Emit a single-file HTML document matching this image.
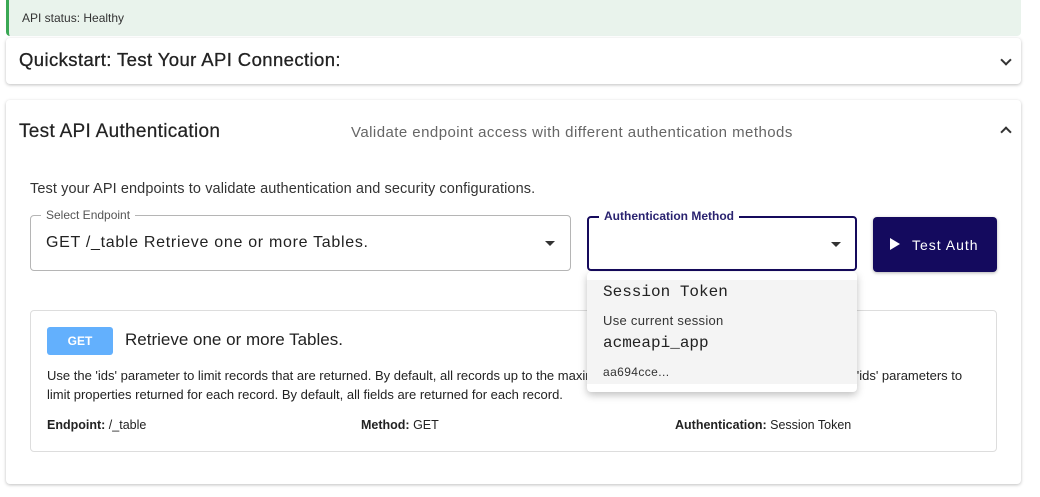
<!DOCTYPE html>
<html><head><style>
*{box-sizing:border-box;margin:0;padding:0}
body{width:1040px;height:497px;background:#fff;font-family:"Liberation Sans",sans-serif;position:relative;overflow:hidden;color:#222}
.abs{position:absolute}
.card{position:absolute;left:6px;width:1015px;background:#fff;border-radius:4px;box-shadow:0 1px 3px rgba(0,0,0,.25)}
.chev{position:absolute;width:8px;height:8px;border-right:2px solid #333;border-bottom:2px solid #333}
.field{position:absolute;border:1px solid #b5b5b5;border-radius:4px}
.lbl{position:absolute;top:-8px;left:10px;background:#fff;padding:0 5px;font-size:12px}
.tri{position:absolute;width:0;height:0;border-left:5px solid transparent;border-right:5px solid transparent;border-top:5px solid #333}
</style></head><body>
<div class="abs" style="left:6px;top:0;width:1015px;height:36px;background:#e9f3ec;border-left:3px solid #3aa854;border-radius:0 0 4px 4px;font-size:12px;padding:11px 0 0 13px;color:#333">API status: Healthy</div>
<div class="card" style="top:38px;height:46px">
 <div class="abs" style="left:13px;top:11px;font-size:18.5px;letter-spacing:.4px;color:#222;-webkit-text-stroke:.3px #222">Quickstart: Test Your API Connection:</div>
 <div class="chev" style="left:996px;top:18px;transform:rotate(45deg)"></div>
</div>
<div class="card" style="top:100px;height:384px">
 <div class="abs" style="left:13px;top:21px;font-size:19px;letter-spacing:.3px;-webkit-text-stroke:.2px #222">Test API Authentication</div>
 <div class="abs" style="left:345px;top:24px;font-size:15px;letter-spacing:.45px;color:#666">Validate endpoint access with different authentication methods</div>
 <div class="chev" style="left:996px;top:28px;transform:rotate(-135deg)"></div>
 <div class="abs" style="left:24px;top:81px;font-size:14.5px;letter-spacing:.1px;color:#333">Test your API endpoints to validate authentication and security configurations.</div>
 <div class="field" style="left:24px;top:115px;width:541px;height:56px">
  <div class="lbl" style="color:#555">Select Endpoint</div>
  <div class="abs" style="left:15px;top:18px;font-size:16px;letter-spacing:.7px;color:#222">GET /_table Retrieve one or more Tables.</div>
  <div class="tri" style="left:514px;top:25px"></div>
 </div>
 <div class="field" style="left:581px;top:116px;width:270px;height:55px;border:2px solid #150a5c">
  <div class="lbl" style="color:#2a2370;font-weight:bold;top:-9px">Authentication Method</div>
  <div class="tri" style="left:242px;top:24px"></div>
 </div>
 <div class="abs" style="left:867px;top:117px;width:124px;height:55px;background:#140a5e;border-radius:4px;color:#fff;font-size:14px;box-shadow:0 1px 3px rgba(0,0,0,.3)">
  <div class="abs" style="left:17px;top:21px;width:0;height:0;border-top:6px solid transparent;border-bottom:6px solid transparent;border-left:10px solid #fff"></div>
  <div class="abs" style="left:39px;top:20px;letter-spacing:1px">Test Auth</div>
 </div>
 <div class="abs" style="left:24px;top:210px;width:967px;height:142px;border:1px solid #ddd;border-radius:4px">
  <div class="abs" style="left:16px;top:16px;width:66px;height:28px;background:#63b0fd;border-radius:3px;color:#fff;font-weight:bold;font-size:12px;text-align:center;line-height:28px">GET</div>
  <div class="abs" style="left:94px;top:19px;font-size:17px">Retrieve one or more Tables.</div>
  <div class="abs" style="left:16px;top:55px;width:935px;font-size:13px;line-height:19px;color:#222">Use the 'ids' parameter to limit records that are returned. By default, all records up to the maximum are returned. Use the 'fields' and 'related' 'ids' parameters to limit properties returned for each record. By default, all fields are returned for each record.</div>
  <div class="abs" style="left:16px;top:107px;font-size:12.5px"><b>Endpoint:</b> /_table</div>
  <div class="abs" style="left:330px;top:107px;font-size:12.5px"><b>Method:</b> GET</div>
  <div class="abs" style="left:644px;top:107px;font-size:12.5px"><b>Authentication:</b> Session Token</div>
 </div>
</div>
<div class="abs" style="left:587px;top:272px;width:270px;height:120px;background:#fff;border-radius:4px;box-shadow:0 3px 8px rgba(0,0,0,.25)">
 <div class="abs" style="left:0;top:8px;width:270px;height:104px;background:#f4f4f4"></div>
 <div class="abs" style="left:16px;top:11px;font-family:'Liberation Mono',monospace;font-size:16px;color:#222">Session Token</div>
 <div class="abs" style="left:16px;top:41px;font-size:13px;color:#333;letter-spacing:.3px">Use current session</div>
 <div class="abs" style="left:16px;top:62px;font-family:'Liberation Mono',monospace;font-size:16px;color:#222">acmeapi_app</div>
 <div class="abs" style="left:16px;top:93px;font-size:12px;color:#333;letter-spacing:.4px">aa694cce...</div>
</div>
</body></html>
